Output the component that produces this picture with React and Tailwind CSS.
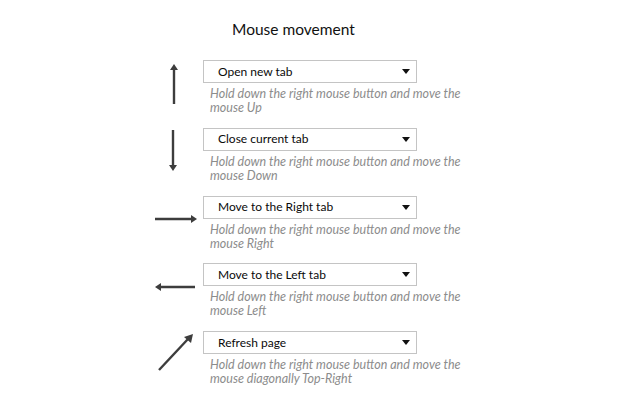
import React from "react";

const rows = [
  { label: "Open new tab", hint: ["Hold down the right mouse button and move the", "mouse Up"], dir: "up" },
  { label: "Close current tab", hint: ["Hold down the right mouse button and move the", "mouse Down"], dir: "down" },
  { label: "Move to the Right tab", hint: ["Hold down the right mouse button and move the", "mouse Right"], dir: "right" },
  { label: "Move to the Left tab", hint: ["Hold down the right mouse button and move the", "mouse Left"], dir: "left" },
  { label: "Refresh page", hint: ["Hold down the right mouse button and move the", "mouse diagonally Top-Right"], dir: "diag" },
];

function Arrow({ dir }) {
  const c = "#3d3d3d";
  let el;
  if (dir === "up")
    el = (
      <>
        <line x1="24" y1="9" x2="24" y2="44" stroke={c} strokeWidth="2.4" />
        <polygon points="20,10 28,10 24,4" fill={c} />
      </>
    );
  else if (dir === "down")
    el = (
      <>
        <line x1="23" y1="2" x2="23" y2="38" stroke={c} strokeWidth="2.4" />
        <polygon points="19,37 27,37 23,43" fill={c} />
      </>
    );
  else if (dir === "right")
    el = (
      <>
        <line x1="5" y1="23" x2="42" y2="23" stroke={c} strokeWidth="2.4" />
        <polygon points="41,19 41,27 47,23" fill={c} />
      </>
    );
  else if (dir === "left")
    el = (
      <>
        <line x1="10" y1="24" x2="45" y2="24" stroke={c} strokeWidth="2.4" />
        <polygon points="11,20 11,28 5,24" fill={c} />
      </>
    );
  else
    el = (
      <>
        <line x1="9" y1="39" x2="38" y2="8" stroke={c} strokeWidth="2.4" />
        <polygon points="34,6 41,12 43,3" fill={c} />
      </>
    );
  return (
    <svg width="53" height="52" viewBox="0 0 53 52" className="shrink-0">
      {el}
    </svg>
  );
}

export default function App() {
  return (
    <div className="w-[618px] h-[394px] bg-white overflow-hidden" style={{ fontFamily: 'Lato, "Open Sans", sans-serif' }}>
      <div className="pt-[19px] pl-[232px] text-[15.5px] leading-[20px] text-[#111]">Mouse movement</div>
      <div className="flex flex-col pt-[21px] pl-[150px]">
        {rows.map((r) => (
          <div key={r.label} className="flex h-[67.75px]">
            <Arrow dir={r.dir} />
            <div className="flex flex-col">
              <div className="w-[214px] h-[23px] border border-[#c4c4c4] flex items-center justify-between pl-[14px] pr-[6px] text-[12px] text-[#0a0a0a]">
                <span>{r.label}</span>
                <svg width="8" height="5" viewBox="0 0 8 5">
                  <polygon points="0,0 8,0 4,5" fill="#111" />
                </svg>
              </div>
              <div className="pl-[7px] mt-[4px] text-[12.5px] leading-[14px] italic text-[#8c8c8c] whitespace-nowrap">
                <div>{r.hint[0]}</div>
                <div>{r.hint[1]}</div>
              </div>
            </div>
          </div>
        ))}
      </div>
    </div>
  );
}
